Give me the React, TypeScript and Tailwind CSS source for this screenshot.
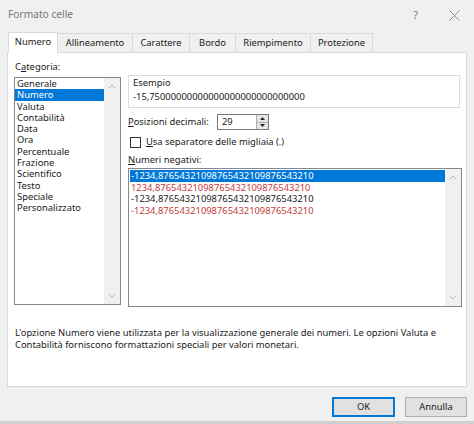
import React from "react";

function Chevron({ up }: { up?: boolean }) {
  return (
    <svg width="8" height="5" viewBox="0 0 8 5">
      <polyline
        points={up ? "0.5,4.5 4,1 7.5,4.5" : "0.5,0.5 4,4 7.5,0.5"}
        fill="none"
        stroke="#b5b5b5"
        strokeWidth="1"
      />
    </svg>
  );
}

function ScrollBar() {
  return (
    <div className="w-[16px] h-full bg-[#f0f0f0] flex flex-col items-center justify-between py-[6px]">
      <Chevron up />
      <Chevron />
    </div>
  );
}

const categories = [
  "Generale",
  "Numero",
  "Valuta",
  "Contabilità",
  "Data",
  "Ora",
  "Percentuale",
  "Frazione",
  "Scientifico",
  "Testo",
  "Speciale",
  "Personalizzato",
];

const tabs = [
  { label: "Numero", w: "w-[50px]" },
  { label: "Allineamento", w: "w-[75px]" },
  { label: "Carattere", w: "w-[57px]" },
  { label: "Bordo", w: "w-[46px]" },
  { label: "Riempimento", w: "w-[75px]" },
  { label: "Protezione", w: "w-[62px]" },
];

const negs = [
  { t: "-1234,87654321098765432109876543210", red: false },
  { t: "1234,87654321098765432109876543210", red: true },
  { t: "-1234,87654321098765432109876543210", red: false },
  { t: "-1234,87654321098765432109876543210", red: true },
];

export default function App() {
  return (
    <div className="w-[474px] h-[424px] bg-[#f0f0f0] font-['Noto_Sans',sans-serif] text-[9.4px] text-[#1a1a1a] overflow-hidden flex flex-col">
      {/* title bar */}
      <div className="h-[30px] flex items-center pl-[8px] pr-[14px] text-[10.2px] text-[#777777]">
        <span className="flex-1">Formato celle</span>
        <span className="mr-[31px] text-[11px]">?</span>
        <svg width="11" height="11" viewBox="0 0 11 11">
          <path d="M0.5 0.5 L10.5 10.5 M10.5 0.5 L0.5 10.5" stroke="#8a8a8a" strokeWidth="1" />
        </svg>
      </div>

      {/* tabs */}
      <div className="flex items-end pl-[8px] h-[22px] relative z-10">
        {tabs.map((t, i) => (
          <div
            key={t.label}
            className={
              i === 0
                ? `${t.w} h-[21px] -mb-px bg-white border-t border-l border-r border-[#d9d9d9] flex items-center justify-center pb-[2px]`
                : `${t.w} h-[19px] border-t border-r border-[#d9d9d9] flex items-center justify-center`
            }
          >
            {t.label}
          </div>
        ))}
      </div>

      {/* panel */}
      <div className="mx-[7px] w-[460px] h-[335px] bg-white border border-[#d9d9d9] flex flex-col pl-[6px] pt-[8px]">
        <div className="flex">
          {/* left column */}
          <div className="w-[107px] flex flex-col">
            <div className="h-[12px] leading-[12px] pl-[1px]">
              C<span className="underline">a</span>tegoria:
            </div>
            <div className="mt-[4px] h-[228px] border border-[#828790] flex">
              <div className="flex-1 flex flex-col">
                {categories.map((c, i) => (
                  <div
                    key={c}
                    className={
                      i === 1
                        ? "h-[11.3px] leading-[11.3px] bg-[#0078d7] text-white pl-[2px]"
                        : "h-[11.3px] leading-[11.3px] pl-[2px]"
                    }
                  >
                    {c}
                  </div>
                ))}
              </div>
              <ScrollBar />
            </div>
          </div>

          {/* right column */}
          <div className="ml-[7px] w-[334px] flex flex-col pt-[14px]">
            <div className="w-[332px] h-[33px] border border-[#dcdcdc] flex flex-col pl-[4px] pt-[1px]">
              <div className="h-[12px] leading-[12px]">Esempio</div>
              <div className="h-[12px] leading-[12px] mt-[2px]">-15,75000000000000000000000000000</div>
            </div>

            <div className="mt-[6px] h-[16px] flex items-center">
              <div className="w-[89px]">
                <span className="underline">P</span>osizioni decimali:
              </div>
              <div className="w-[52px] h-[16px] border border-[#7a7a7a] bg-white flex items-center">
                <span className="flex-1 pl-[4px]">29</span>
                <div className="w-[12px] h-full flex flex-col border-l border-[#adadad] bg-[#e5e5e5]">
                  <div className="flex-1 flex items-center justify-center border-b border-[#adadad]">
                    <svg width="5" height="3" viewBox="0 0 5 3">
                      <polygon points="0,3 2.5,0 5,3" fill="#222" />
                    </svg>
                  </div>
                  <div className="flex-1 flex items-center justify-center">
                    <svg width="5" height="3" viewBox="0 0 5 3">
                      <polygon points="0,0 2.5,3 5,0" fill="#222" />
                    </svg>
                  </div>
                </div>
              </div>
            </div>

            <div className="mt-[6px] h-[12px] flex items-center pl-[2px]">
              <div className="w-[11px] h-[11px] border border-[#333333] bg-white" />
              <span className="ml-[5px]">
                <span className="underline">U</span>sa separatore delle migliaia (.)
              </span>
            </div>

            <div className="mt-[6px] h-[12px] leading-[12px]">
              <span className="underline">N</span>umeri negativi:
            </div>

            <div className="mt-[2px] h-[139px] border border-[#828790] flex">
              <div className="flex-1 flex flex-col pt-[1px] pl-[1px]">
                {negs.map((n, i) => (
                  <div
                    key={i}
                    className={
                      i === 0
                        ? "h-[11.5px] leading-[11.5px] bg-[#0078d7] text-white pl-[1px]"
                        : n.red
                        ? "h-[11.5px] leading-[11.5px] text-[#c43c3c] pl-[1px]"
                        : "h-[11.5px] leading-[11.5px] pl-[1px]"
                    }
                  >
                    {n.t}
                  </div>
                ))}
              </div>
              <ScrollBar />
            </div>
          </div>
        </div>

        <div className="mt-[20px] pl-[1px] pr-[8px] leading-[11.5px]">
          L'opzione Numero viene utilizzata per la visualizzazione generale dei numeri. Le opzioni Valuta e
          Contabilità forniscono formattazioni speciali per valori monetari.
        </div>
      </div>

      {/* buttons */}
      <div className="mt-[10px] flex justify-end pr-[7px] gap-[10px]">
        <div className="w-[63px] h-[20px] border-2 border-[#0078d7] bg-[#e1e1e1] flex items-center justify-center">
          OK
        </div>
        <div className="w-[62px] h-[20px] border border-[#adadad] bg-[#e1e1e1] flex items-center justify-center">
          Annulla
        </div>
      </div>

      <div className="mt-auto h-[3px] bg-[#cfcfcf]" />
    </div>
  );
}
